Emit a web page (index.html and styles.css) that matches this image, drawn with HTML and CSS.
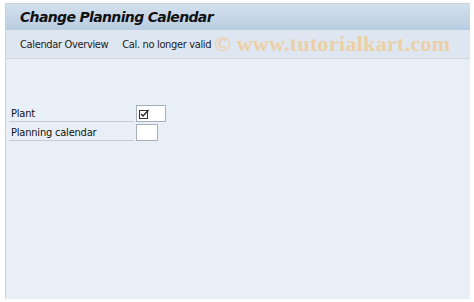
FILE: index.html
```html
<!DOCTYPE html>
<html lang="en">
<head>
    <meta charset="UTF-8">
    <title>Change Planning Calendar</title>
    <link rel="stylesheet" href="styles.css">
</head>
<body>
<div class="window">
    <div class="title-bar">
        <h1>Change Planning Calendar</h1>
    </div>
    <div class="toolbar">
        <span class="tool">Calendar Overview</span>
        <span class="tool">Cal. no longer valid</span>
        <span class="watermark">&copy; www.tutorialkart.com</span>
    </div>
    <div class="content">
        <div class="field-row">
            <label class="field-label">Plant</label>
            <span class="field-input wide">
                <svg width="10" height="10" viewBox="0 0 10 10">
                    <rect x="0.5" y="1.5" width="8" height="8" fill="none" stroke="#333" stroke-width="1"/>
                    <path d="M2 5 L4 7 L9.5 1" fill="none" stroke="#222" stroke-width="1.3"/>
                </svg>
            </span>
        </div>
        <div class="field-row">
            <label class="field-label">Planning calendar</label>
            <span class="field-input"></span>
        </div>
    </div>
</div>
</body>
</html>
```

FILE: styles.css
```css
body {
    margin: 0;
    background: #fff;
    font-family: Tahoma, "DejaVu Sans", Verdana, sans-serif;
}

.window {
    margin: 3px 4px 4px 5px;
    height: 295px;
    background: #e9eff7;
    border-left: 1px solid #c9d1da;
    border-top: 1px solid #c9d1da;
    display: flex;
    flex-direction: column;
}

.title-bar {
    height: 26px;
    background: linear-gradient(#d3e0ed, #b9cde1);
    display: flex;
    align-items: center;
    padding-left: 14px;
}

.title-bar h1 {
    margin: 0;
    font-family: "DejaVu Sans", Verdana, sans-serif;
    font-size: 14px;
    font-weight: bold;
    font-style: italic;
    color: #111;
    letter-spacing: -0.65px;
}

.toolbar {
    height: 28px;
    background: #dee7f1;
    border-bottom: 1px solid #cfd8e2;
    display: flex;
    align-items: center;
    padding-left: 14px;
    font-size: 11px;
    color: #222;
}

.tool {
    font-family: "DejaVu Sans Condensed", "DejaVu Sans", sans-serif;
    font-size: 11px;
    letter-spacing: -0.35px;
    margin-right: 14px;
}

.watermark {
    margin-left: -11px;
    font-family: "Liberation Serif", "DejaVu Serif", serif;
    font-size: 22px;
    font-weight: bold;
    color: #eccfa4;
    letter-spacing: 0.3px;
}

.content {
    padding-top: 44px;
    padding-left: 3px;
}

.field-row {
    display: flex;
    align-items: flex-end;
    height: 19px;
}

.field-label {
    width: 125px;
    height: 18px;
    box-sizing: border-box;
    padding-left: 2px;
    padding-top: 3px;
    border-bottom: 1px solid #c5ccd4;
    font-family: "DejaVu Sans Condensed", "DejaVu Sans", sans-serif;
    font-size: 11px;
    letter-spacing: -0.2px;
    color: #111;
}

.field-input {
    width: 22px;
    height: 17px;
    box-sizing: border-box;
    background: #fff;
    border: 1px solid #a7b0ba;
    margin-left: 2px;
    display: flex;
    align-items: center;
    padding-left: 2px;
}

.field-input.wide {
    width: 30px;
}
```
